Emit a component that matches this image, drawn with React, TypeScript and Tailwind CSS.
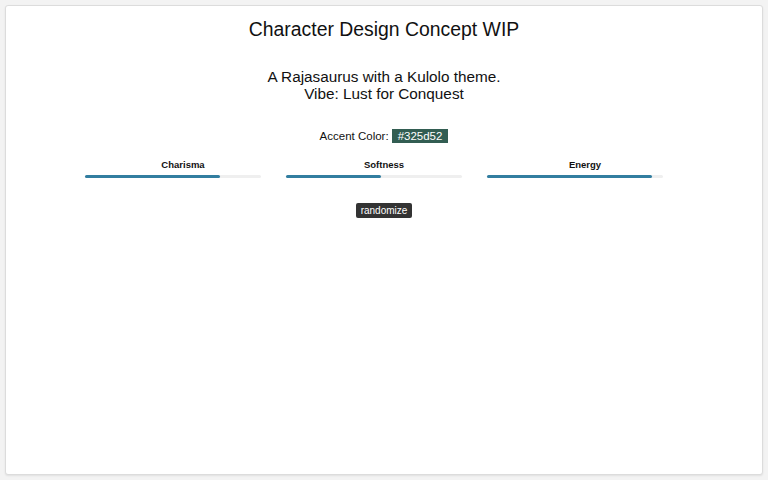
const stats = [
  { label: 'Charisma', value: 77 },
  { label: 'Softness', value: 54 },
  { label: 'Energy', value: 94 },
];

export default function App() {
  return (
    <div className="h-[480px] w-[768px] bg-[#f3f3f3] p-[5px] font-['Liberation_Sans',Arial,sans-serif] text-[#111]">
      <div className="flex h-full flex-col items-center rounded-[3px] border border-[#dcdcdc] bg-white shadow-[0_1px_2px_rgba(0,0,0,0.08)]">
        <h1 className="mt-[11px] text-[19.4px] leading-[24px]">Character Design Concept WIP</h1>

        <p className="mt-[27px] text-center text-[15.3px] leading-[17px]">
          A Rajasaurus with a Kulolo theme.
          <br />
          Vibe: Lust for Conquest
        </p>

        <div className="mt-[27px] flex items-center gap-[3px] text-[11.5px] leading-[14px]">
          <span>Accent Color:</span>
          <span className="bg-[#325d52] px-[6px] text-white">#325d52</span>
        </div>

        <div className="mt-[16px] grid w-[603px] grid-cols-3">
          {stats.map((s) => (
            <div key={s.label} className="flex flex-col">
              <span className="text-center text-[9.5px] font-bold leading-[12px]">{s.label}</span>
              <div className="ml-[2px] mt-[4px] h-[3px] w-[176px] rounded-full bg-[#efefef]">
                <div className="h-full rounded-full bg-[#327ea0]" style={{ width: `${s.value}%` }} />
              </div>
            </div>
          ))}
        </div>

        <button className="mt-[25px] rounded-[2px] bg-[#333] px-[5px] py-[2px] text-[10px] leading-[11px] text-white">
          randomize
        </button>
      </div>
    </div>
  );
}
